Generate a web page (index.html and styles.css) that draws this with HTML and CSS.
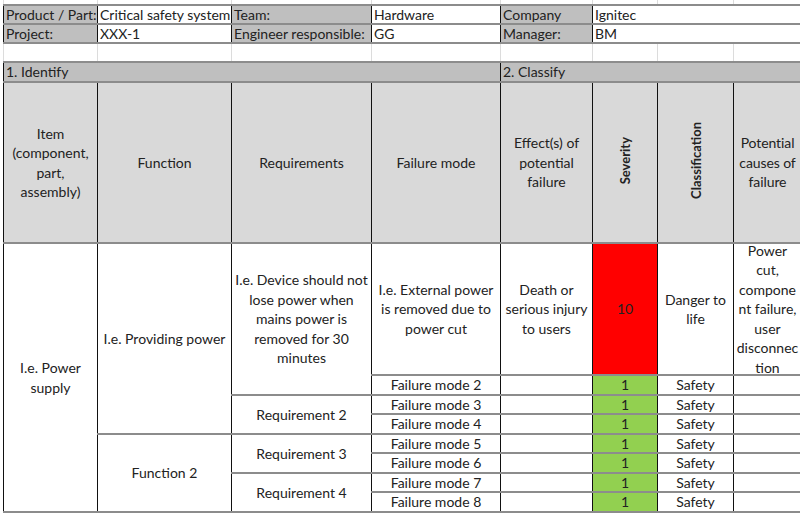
FILE: index.html
```html
<!DOCTYPE html>
<html lang="en">
<head>
<meta charset="utf-8">
<title>FMEA</title>
<link rel="stylesheet" href="styles.css">
</head>
<body>
<table class="sheet">
  <colgroup>
    <col class="c1"><col class="c2"><col class="c3"><col class="c4"><col class="c5"><col class="c6"><col class="c7"><col class="c8"><col class="c9">
  </colgroup>
  <tr class="r-top">
    <td class="grid"></td><td class="grid"></td><td class="grid"></td><td class="grid"></td><td class="grid"></td><td class="grid"></td><td class="grid"></td><td class="grid"></td><td class="grid"></td>
  </tr>
  <tr class="r-info">
    <td class="lbl first">Product / Part:</td>
    <td class="val">Critical safety system</td>
    <td class="lbl">Team:</td>
    <td class="val">Hardware</td>
    <td class="lbl">Company</td>
    <td class="val" colspan="4">Ignitec</td>
  </tr>
  <tr class="r-info">
    <td class="lbl first">Project:</td>
    <td class="val">XXX-1</td>
    <td class="lbl">Engineer responsible:</td>
    <td class="val">GG</td>
    <td class="lbl">Manager:</td>
    <td class="val" colspan="4">BM</td>
  </tr>
  <tr class="r-gap">
    <td class="grid"></td><td class="grid"></td><td class="grid"></td><td class="grid"></td><td class="grid"></td><td class="grid"></td><td class="grid"></td><td class="grid"></td><td class="grid"></td>
  </tr>
  <tr class="r-sec">
    <td class="sec first" colspan="4">1. Identify</td>
    <td class="sec" colspan="5">2. Classify</td>
  </tr>
  <tr class="r-head">
    <th class="first">Item<br>(component,<br>part,<br>assembly)</th>
    <th>Function</th>
    <th>Requirements</th>
    <th>Failure mode</th>
    <th>Effect(s) of<br>potential<br>failure</th>
    <th class="sev-h"><span class="vert">Severity</span></th>
    <th><span class="vert">Classification</span></th>
    <th class="tight">Potential<br>causes of<br>failure</th>
    <th></th>
  </tr>
  <tr class="r-main">
    <td class="first ml" rowspan="8">I.e. Power<br>supply</td>
    <td rowspan="4">I.e. Providing power</td>
    <td class="ml" rowspan="2">I.e. Device should not<br>lose power when<br>mains power is<br>removed for 30<br>minutes</td>
    <td class="ml">I.e. External power<br>is removed due to<br>power cut</td>
    <td class="ml">Death or<br>serious injury<br>to users</td>
    <td class="sev red">10</td>
    <td class="ml">Danger to<br>life</td>
    <td class="cause"><div class="clip"><span>Power</span><span>cut,</span><span>compone</span><span>nt failure,</span><span>user</span><span>disconnec</span><span>tion</span></div></td>
    <td></td>
  </tr>
  <tr class="r-a">
    <td>Failure mode 2</td><td></td><td class="sev green">1</td><td>Safety</td><td></td><td></td>
  </tr>
  <tr class="r-b">
    <td rowspan="2">Requirement 2</td>
    <td>Failure mode 3</td><td></td><td class="sev green">1</td><td>Safety</td><td></td><td></td>
  </tr>
  <tr class="r-a">
    <td>Failure mode 4</td><td></td><td class="sev green">1</td><td>Safety</td><td></td><td></td>
  </tr>
  <tr class="r-b">
    <td rowspan="4">Function 2</td>
    <td rowspan="2">Requirement 3</td>
    <td>Failure mode 5</td><td></td><td class="sev green">1</td><td>Safety</td><td></td><td></td>
  </tr>
  <tr class="r-a">
    <td>Failure mode 6</td><td></td><td class="sev green">1</td><td>Safety</td><td></td><td></td>
  </tr>
  <tr class="r-b">
    <td rowspan="2">Requirement 4</td>
    <td>Failure mode 7</td><td></td><td class="sev green">1</td><td>Safety</td><td></td><td></td>
  </tr>
  <tr class="r-a">
    <td>Failure mode 8</td><td></td><td class="sev green">1</td><td>Safety</td><td></td><td></td>
  </tr>
</table>
</body>
</html>
```

FILE: styles.css
```css
html, body {
  margin: 0;
  padding: 0;
  width: 800px;
  height: 514px;
  overflow: hidden;
  background: #ffffff;
}

body {
  font-family: Lato, "Open Sans", sans-serif;
  font-size: 14px;
  color: #222222;
}

.sheet {
  border-collapse: collapse;
  table-layout: fixed;
  width: 898px;
  margin-left: 3px;
}

.c1 { width: 94px; }
.c2 { width: 134px; }
.c3 { width: 140px; }
.c4 { width: 129px; }
.c5 { width: 92px; }
.c6 { width: 65px; }
.c7 { width: 76px; }
.c8 { width: 68px; }
.c9 { width: 100px; }

td, th {
  padding: 0 2px;
  line-height: 16px;
  white-space: nowrap;
  overflow: hidden;
}

.ml, .r-head th {
  line-height: 19.5px;
}

.grid {
  border-left: 1px solid #dcdcdc;
  border-right: 1px solid #dcdcdc;
}

.r-top { height: 5px; }
.r-top td { line-height: 0; }
.r-gap { height: 19px; }

.r-info { height: 19px; }
.r-info td {
  border-top: 2px solid #8c8c8c;
  border-bottom: 2px solid #8c8c8c;
  border-left: 1px solid #111;
  border-right: 1px solid #111;
  vertical-align: middle;
  text-align: left;
}

.lbl { background: #bfbfbf; }
.val { background: #ffffff; }

.r-sec { height: 20px; }
.sec {
  background: #bfbfbf;
  border-top: 2px solid #8c8c8c;
  border-bottom: 2px solid #8c8c8c;
  border-left: 1px solid #111;
  text-align: left;
}

.r-head { height: 161px; }
.r-head th {
  background: #d9d9d9;
  font-weight: normal;
  text-align: center;
  vertical-align: middle;
  border-left: 1px solid #111;
  border-right: 1px solid #111;
  border-bottom: 2px solid #8c8c8c;
}

.r-head th.tight {
  padding: 0;
  letter-spacing: -0.1px;
}

.vert {
  display: inline-block;
  writing-mode: vertical-rl;
  transform: rotate(180deg);
  font-weight: bold;
  font-size: 13px;
  line-height: 16px;
}

.r-main { height: 132px; }
.r-a { height: 20px; }
.r-b { height: 19px; }

.r-main td, .r-a td, .r-b td {
  text-align: center;
  vertical-align: middle;
  border-left: 1px solid #111;
  border-right: 1px solid #111;
  border-bottom: 2px solid #8c8c8c;
  background: #ffffff;
}

.r-main td.red { background: #ff0000; }
.r-a td.green, .r-b td.green { background: #92d050; }
.sev { border-right-color: #4a4a4a; }

.cause { padding: 0; }
.clip {
  height: 130px;
  overflow: hidden;
  display: flex;
  flex-direction: column;
  justify-content: center;
  align-items: center;
}
.clip span {
  display: block;
  line-height: 19.5px;
  flex: none;
}
```
